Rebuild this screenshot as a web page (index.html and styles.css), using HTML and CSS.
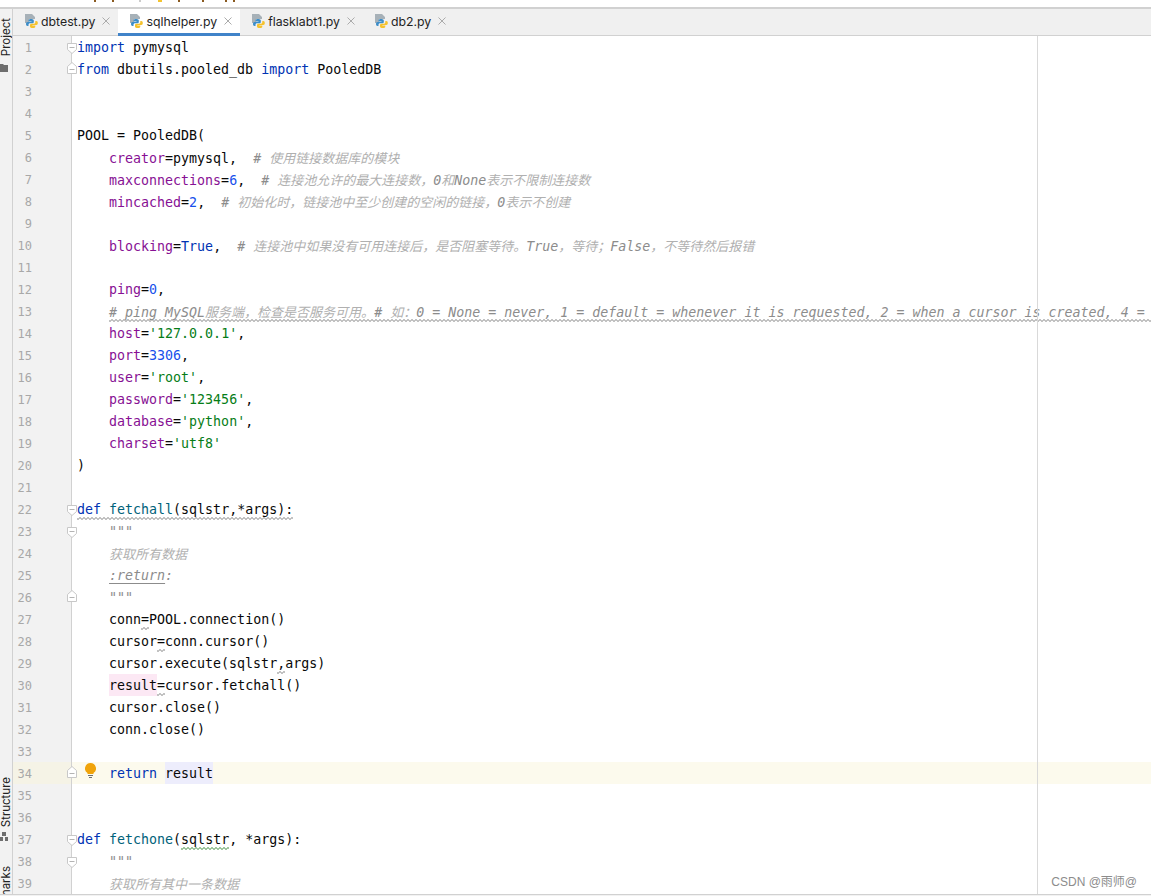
FILE: index.html
```html
<!DOCTYPE html>
<html lang="en">
<head>
    <meta charset="UTF-8">
    <title>sqlhelper.py</title>
    <link rel="stylesheet" href="styles.css">
</head>
<body>
    <div class="topbar">
        <!-- bottoms of the cut off toolbar text -->
        <svg class="ticks" width="260" height="2" viewBox="0 0 260 2"><path d="M94 0h2v2h-2zM112 0h2v2h-2zM178 0h2v2h-2zM202 0h2v2h-2zM225 0h2v2h-2zM233 0h2v2h-2z" fill="#8a5a20"/><path d="M139 0h2v2h-2z" fill="#cccccc"/><path d="M158 0h4v2h-4z" fill="#f4c430"/></svg>
    </div>
    <div class="main">
        <!-- left tool strip -->
        <div class="strip">
            <div class="strip-top">
                <span class="vtext">Project</span>
                <svg class="strip-icon" width="8" height="8" viewBox="0 0 8 8"><path d="M0 0h3l1 1h4v7H0z" fill="#6e6e6e"/></svg>
            </div>
            <div class="strip-bottom">
                <span class="vtext">Structure</span>
                <svg class="strip-icon" width="8" height="9" viewBox="0 0 8 9"><path d="M2 0h4v4H2zM0 5h3v4H0zM5 5h3v4H5z" fill="#6e6e6e"/></svg>
                <span class="vtext marks">Bookmarks</span>
            </div>
        </div>
        <div class="content">
            <!-- tabs -->
            <div class="tabs">
                <div class="tab"><svg class="py" viewBox="0 0 14 14"><use href="#pyicon"/></svg>dbtest.py<svg class="close" viewBox="0 0 8 8"><use href="#closeicon"/></svg></div>
                <div class="tab active"><svg class="py" viewBox="0 0 14 14"><use href="#pyicon"/></svg>sqlhelper.py<svg class="close" viewBox="0 0 8 8"><use href="#closeicon"/></svg></div>
                <div class="tab"><svg class="py" viewBox="0 0 14 14"><use href="#pyicon"/></svg>flasklabt1.py<svg class="close" viewBox="0 0 8 8"><use href="#closeicon"/></svg></div>
                <div class="tab"><svg class="py" viewBox="0 0 14 14"><use href="#pyicon"/></svg>db2.py<svg class="close" viewBox="0 0 8 8"><use href="#closeicon"/></svg></div>
            </div>
            <div class="editor">
                <div class="margin-line"></div>
                <div class="line"><span class="num">1</span><svg class="fold open" viewBox="0 0 10 11"><use href="#foldopen"/></svg><span class="code"><span class="kw">import</span> pymysql</span></div>
                <div class="line"><span class="num">2</span><svg class="fold end" viewBox="0 0 10 12"><use href="#foldend"/></svg><span class="code"><span class="kw">from</span> dbutils.pooled_db <span class="kw">import</span> PooledDB</span></div>
                <div class="line"><span class="num">3</span><span class="code"></span></div>
                <div class="line"><span class="num">4</span><span class="code"></span></div>
                <div class="line"><span class="num">5</span><span class="code">POOL = PooledDB(</span></div>
                <div class="line"><span class="num">6</span><span class="code">    <span class="arg">creator</span>=pymysql,  <span class="cm"># <span class="zh">使用链接数据库的模块</span></span></span></div>
                <div class="line"><span class="num">7</span><span class="code">    <span class="arg">maxconnections</span>=<span class="no">6</span>,  <span class="cm"># <span class="zh">连接池允许的最大连接数，</span>0<span class="zh">和</span>None<span class="zh">表示不限制连接数</span></span></span></div>
                <div class="line"><span class="num">8</span><span class="code">    <span class="arg">mincached</span>=<span class="no">2</span>,  <span class="cm"># <span class="zh">初始化时，链接池中至少创建的空闲的链接，</span>0<span class="zh">表示不创建</span></span></span></div>
                <div class="line"><span class="num">9</span><span class="code"></span></div>
                <div class="line"><span class="num">10</span><span class="code">    <span class="arg">blocking</span>=<span class="kw">True</span>,  <span class="cm"># <span class="zh">连接池中如果没有可用连接后，是否阻塞等待。</span>True<span class="zh">，等待；</span>False<span class="zh">，不等待然后报错</span></span></span></div>
                <div class="line"><span class="num">11</span><span class="code"></span></div>
                <div class="line"><span class="num">12</span><span class="code">    <span class="arg">ping</span>=<span class="no">0</span>,</span></div>
                <div class="line"><span class="num">13</span><span class="code">    <span class="cm wavy"># ping MySQL<span class="zh">服务端，检查是否服务可用。</span># <span class="zh">如：</span>0 = None = never, 1 = default = whenever it is requested, 2 = when a cursor is created, 4 = when a query is executed, 7 = always</span></span></div>
                <div class="line"><span class="num">14</span><span class="code">    <span class="arg">host</span>=<span class="str">'127.0.0.1'</span>,</span></div>
                <div class="line"><span class="num">15</span><span class="code">    <span class="arg">port</span>=<span class="no">3306</span>,</span></div>
                <div class="line"><span class="num">16</span><span class="code">    <span class="arg">user</span>=<span class="str">'root'</span>,</span></div>
                <div class="line"><span class="num">17</span><span class="code">    <span class="arg">password</span>=<span class="str">'123456'</span>,</span></div>
                <div class="line"><span class="num">18</span><span class="code">    <span class="arg">database</span>=<span class="str">'python'</span>,</span></div>
                <div class="line"><span class="num">19</span><span class="code">    <span class="arg">charset</span>=<span class="str">'utf8'</span></span></div>
                <div class="line"><span class="num">20</span><span class="code">)</span></div>
                <div class="line"><span class="num">21</span><span class="code"></span></div>
                <div class="line"><span class="num">22</span><svg class="fold open" viewBox="0 0 10 11"><use href="#foldopen"/></svg><span class="code"><span class="wavy"><span class="kw">def</span> <span class="fn">fetchall</span>(sqlstr,*args):</span></span></div>
                <div class="line"><span class="num">23</span><svg class="fold open" viewBox="0 0 10 11"><use href="#foldopen"/></svg><span class="code">    <span class="cm">"""</span></span></div>
                <div class="line"><span class="num">24</span><span class="code">    <span class="cm"><span class="zh">获取所有数据</span></span></span></div>
                <div class="line"><span class="num">25</span><span class="code">    <span class="cm"><span class="doctag">:return</span>:</span></span></div>
                <div class="line"><span class="num">26</span><svg class="fold end" viewBox="0 0 10 12"><use href="#foldend"/></svg><span class="code">    <span class="cm">"""</span></span></div>
                <div class="line"><span class="num">27</span><span class="code">    conn<span class="wavy">=</span>POOL.connection()</span></div>
                <div class="line"><span class="num">28</span><span class="code">    cursor<span class="wavy">=</span>conn.cursor()</span></div>
                <div class="line"><span class="num">29</span><span class="code">    cursor.execute(sqlstr<span class="wavy">,</span>args)</span></div>
                <div class="line"><span class="num">30</span><span class="code">    <span class="write">result</span><span class="wavy">=</span>cursor.fetchall()</span></div>
                <div class="line"><span class="num">31</span><span class="code">    cursor.close()</span></div>
                <div class="line"><span class="num">32</span><span class="code">    conn.close()</span></div>
                <div class="line"><span class="num">33</span><span class="code"></span></div>
                <div class="line current"><span class="num">34</span><svg class="fold end" viewBox="0 0 10 12"><use href="#foldend"/></svg>
                    <svg class="bulb" width="11" height="16" viewBox="0 0 11 16"><path d="M5.500 0a5.500 5.500 0 0 1 3 10.100V11h-6v-.9A5.500 5.500 0 0 1 5.500 0z" fill="#f0a30a"/><path d="M3 12.500h5M4 14.500h3" stroke="#6e6e6e" stroke-width="1"/></svg>
                    <span class="code">    <span class="kw">return</span> <span class="read">result</span></span></div>
                <div class="line"><span class="num">35</span><span class="code"></span></div>
                <div class="line"><span class="num">36</span><span class="code"></span></div>
                <div class="line"><span class="num">37</span><svg class="fold open" viewBox="0 0 10 11"><use href="#foldopen"/></svg><span class="code"><span class="kw">def</span> <span class="fn">fetchone</span>(<span class="wavy green">sqlstr</span>, *args):</span></div>
                <div class="line"><span class="num">38</span><svg class="fold open" viewBox="0 0 10 11"><use href="#foldopen"/></svg><span class="code">    <span class="cm">"""</span></span></div>
                <div class="line"><span class="num">39</span><span class="code">    <span class="cm"><span class="zh">获取所有其中一条数据</span></span></span></div>
            </div>
        </div>
    </div>
    <div class="watermark">CSDN @雨师@</div>

    <svg class="defs" width="0" height="0">
        <defs>
            <g id="pyicon">
                <path d="M1 0H8L11 3V5H5V9H1Z" fill="#a7b1b8"/>
                <path id="snake" d="M7 5C5.500 5 4.500 5.500 4.500 6.500V7.500H7.500V8H3.500C2.500 8 2 8.700 2 10S2.500 12 3.500 12H4.500V10.800C4.500 10 5.200 9.300 6 9.300H8.500C9.200 9.300 9.800 8.700 9.800 8V6.500C9.800 5.500 8.500 5 7 5Z" fill="#3d8ec9"/>
                <path d="M7 5C5.500 5 4.500 5.500 4.500 6.500V7.500H7.500V8H3.500C2.500 8 2 8.700 2 10S2.500 12 3.500 12H4.500V10.800C4.500 10 5.200 9.300 6 9.300H8.500C9.200 9.300 9.800 8.700 9.800 8V6.500C9.800 5.500 8.500 5 7 5Z" fill="#f5c22d" transform="rotate(180 7.900 9.500)"/>
            </g>
            <path id="closeicon" d="M.5.5l7 7M7.500.5l-7 7" stroke="#ababab" stroke-width="1" fill="none"/>
            <g id="foldopen">
                <path d="M.5.500H9.500V6.500L5 10.500.5 6.500Z" fill="#fff" stroke="#c8c8c8"/>
                <path d="M2.500 4.500H7.500" stroke="#b4b4b4"/>
            </g>
            <g id="foldend">
                <path d="M.5 11.500H9.500V4.500L5 .5.5 4.500Z" fill="#fff" stroke="#c8c8c8"/>
                <path d="M2.500 7.500H7.500" stroke="#b4b4b4"/>
            </g>
        </defs>
    </svg>
</body>
</html>
```
FILE: styles.css
```css
*{
    box-sizing: border-box;
}
html, body{
    height: 100%;
}
body{
    margin: 0;
    background: #f2f2f2;
    overflow: hidden;
    font-family: "Inter", "Noto Sans CJK SC", sans-serif;
    display: flex;
    flex-direction: column;
}
.topbar{
    height: 9px;
    flex: none;
    background: #fff;
    border-bottom: 2px solid #d1d1d1;
}
.ticks{
    display: block;
}
.main{
    display: flex;
    height: 886px;
    flex: none;
    border-bottom: 1px solid #d1d1d1;
}
/* left tool strip */
.strip{
    width: 13px;
    flex: none;
    background: #f2f2f2;
    border-right: 1px solid #d1d1d1;
    display: flex;
    flex-direction: column;
    overflow: hidden;
}
.strip-top, .strip-bottom{
    display: flex;
    flex-direction: column;
    align-items: flex-start;
}
.strip-top{
    margin-top: 9px;
    gap: 8px;
}
.strip-bottom{
    margin-top: 705px;
    gap: 5px;
}
.vtext{
    writing-mode: vertical-rl;
    transform: rotate(180deg);
    font-family: "Inter", sans-serif;
    font-size: 11.5px;
    line-height: 12px;
    color: #222;
    width: 7px;
    white-space: nowrap;
}
.strip-icon{
    flex: none;
}
.marks{
    margin-top: 20px;
}
.content{
    flex: 1;
    min-width: 0;
}
/* tabs */
.tabs{
    display: flex;
    height: 27px;
    background: #f0f0f0;
    border-bottom: 1px solid #d1d1d1;
}
.tab{
    display: flex;
    align-items: center;
    height: 27px;
    padding: 0 8px 3px 11px;
    font-size: 12.3px;
    color: #1f1f1f;
    white-space: nowrap;
}
.tab.active{
    background: #fff;
    border-bottom: 3px solid #4083c9;
    padding-bottom: 0;
}
.py{
    width: 14px;
    height: 14px;
    margin-right: 3px;
}
.close{
    width: 8px;
    height: 8px;
    margin-left: 7px;
}
/* editor */
.editor{
    position: relative;
    height: 858px;
    overflow: hidden;
    background: #fff;
}
.margin-line{
    position: absolute;
    left: 1024px;
    top: 0;
    bottom: 0;
    width: 1px;
    background: #d9d9d9;
    z-index: 2;
}
.line{
    position: relative;
    display: flex;
    height: 22px;
}
.num{
    width: 59px;
    flex: none;
    background: #f2f2f2;
    border-right: 1px solid #d1d1d1;
    color: #a8a8a8;
    font-family: "DejaVu Sans Mono", monospace;
    font-size: 12px;
    line-height: 24px;
    text-align: right;
    padding-right: 39px;
}
.code{
    padding-left: 5px;
    white-space: pre;
    font-family: "DejaVu Sans Mono", "Noto Sans CJK SC", monospace;
    font-size: 13.3px;
    line-height: 24px;
    color: #080808;
}
.kw{
    color: #0033b3;
}
.fn{
    color: #00627a;
}
.arg{
    color: #871094;
}
.no{
    color: #1750eb;
}
.str{
    color: #067d17;
}
.cm{
    color: #8c8c8c;
    font-style: italic;
}
.zh{
    font-family: "Noto Sans CJK SC", sans-serif;
    font-size: 13px;
    color: #b0b0b0;
}
.doctag{
    text-decoration: underline;
    text-underline-offset: 3px;
}
/* small zigzag under weak warnings */
.wavy{
    display: inline-block;
    height: 22px;
    background-image: linear-gradient(135deg, transparent 40%, #c2c2c2 40%, #c2c2c2 60%, transparent 60%), linear-gradient(45deg, transparent 40%, #c2c2c2 40%, #c2c2c2 60%, transparent 60%);
    background-size: 4px 3px;
    background-position: 0 19px, 2px 19px;
    background-repeat: repeat-x;
}
.wavy.green{
    background-image: linear-gradient(135deg, transparent 40%, #9fc79f 40%, #9fc79f 60%, transparent 60%), linear-gradient(45deg, transparent 40%, #9fc79f 40%, #9fc79f 60%, transparent 60%);
}
.write{
    background: #fce8f4;
    display: inline-block;
    height: 22px;
}
.read{
    background: #ededfc;
    display: inline-block;
    height: 22px;
}
.current{
    background: #fcfaed;
}
.current .num{
    background: #f5f3e6;
}
/* fold markers sit on top of the gutter edge */
.fold{
    position: absolute;
    left: 54px;
    width: 10px;
}
.fold.open{
    top: 7px;
    height: 11px;
}
.fold.end{
    top: 4px;
    height: 12px;
}
.bulb{
    position: absolute;
    left: 72px;
    top: 1px;
}
.defs{
    position: absolute;
}
.watermark{
    position: absolute;
    right: 14px;
    bottom: 7px;
    font-family: "Liberation Sans", "Noto Sans CJK SC", sans-serif;
    font-size: 12px;
    color: #8c8c8c;
    z-index: 3;
}
```
